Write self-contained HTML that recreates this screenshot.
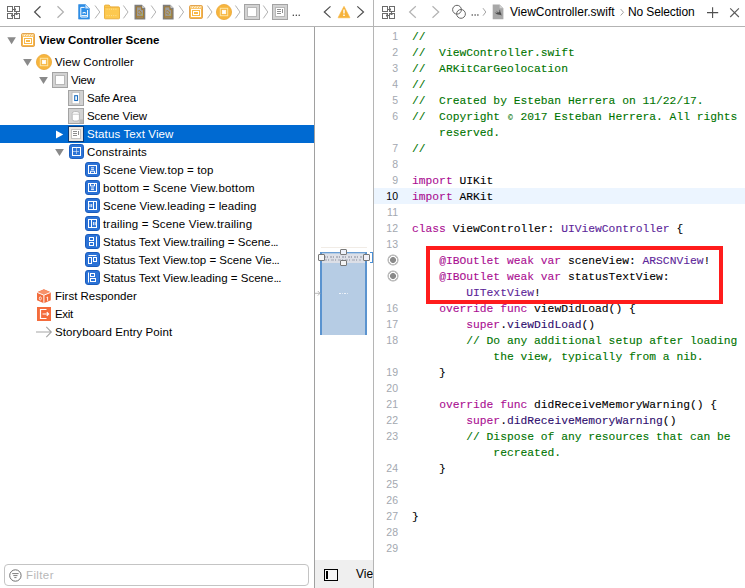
<!DOCTYPE html>
<html><head><meta charset="utf-8">
<style>
*{margin:0;padding:0;box-sizing:border-box}
html,body{width:745px;height:588px;overflow:hidden;background:#fff}
body{position:relative;font-family:"Liberation Sans",sans-serif;font-size:12px;color:#000}
.a{position:absolute}
svg{position:absolute;overflow:visible}
.hl{position:absolute;background:#bcbcbc}
.t{position:absolute;white-space:pre;font-size:11.5px;line-height:18px;height:18px;letter-spacing:0.18px}
.b{font-weight:bold;letter-spacing:0}
.j{font-size:12px;letter-spacing:0}
.el{letter-spacing:-0.8px}
.code{position:absolute;left:412px;top:0;font-family:"Liberation Mono",monospace;font-size:11.3px;white-space:pre}
.ln{position:absolute;font-family:"Liberation Sans",sans-serif;font-size:10.5px;line-height:16px;color:#a3a8b0;text-align:right;width:30px;left:368px}
.ln.cur{color:#000}
.ob{position:absolute;left:387.4px;width:12px;height:12px;margin-top:0px;background:radial-gradient(circle at 50% 50%,#8a8a8a 0,#8a8a8a 2.7px,#fdfdfd 3.2px,#fdfdfd 3.8px,#bdbdbd 4.3px,#bdbdbd 5.2px,rgba(255,255,255,0) 5.9px)}
.cl{position:absolute;left:412px;margin-top:1px;font-family:"Liberation Mono",monospace;font-size:11.3px;white-space:pre;line-height:16px;height:16px;-webkit-text-stroke:0.1px}
.c{color:#007400}.k{color:#aa0d91}.ty{color:#5c2699}.m{color:#2e0d6e}
</style></head><body>

<!-- top bar separators -->
<div class="hl" style="left:0;top:26px;width:745px;height:1px;background:#b3b3b3"></div>
<div class="hl" style="left:373px;top:0;width:1px;height:588px;background:#b5b5b5"></div>
<div class="hl" style="left:314px;top:27px;width:1px;height:561px;background:#a0a0a0"></div>

<!-- selection row -->
<div class="a" style="left:0;top:125px;width:314px;height:18px;background:#006ad2"></div>

<!-- outline rows -->
<div class="t b" style="left:39px;top:31px;letter-spacing:-0.045px">View Controller Scene</div>
<div class="t" style="left:55px;top:53px;letter-spacing:0.079px">View Controller</div>
<div class="t" style="left:71px;top:71px;letter-spacing:-0.220px">View</div>
<div class="t" style="left:87px;top:89px;letter-spacing:-0.170px">Safe Area</div>
<div class="t" style="left:87px;top:107px;letter-spacing:-0.054px">Scene View</div>
<div class="t" style="left:87px;top:125px;color:#fff;letter-spacing:0.120px">Status Text View</div>
<div class="t" style="left:87px;top:143px;letter-spacing:0.170px">Constraints</div>
<div class="t" style="left:103px;top:161px;letter-spacing:0.123px">Scene View.top = top</div>
<div class="t" style="left:103px;top:179px;letter-spacing:0.204px">bottom = Scene View.bottom</div>
<div class="t" style="left:103px;top:197px;letter-spacing:0.114px">Scene View.leading = leading</div>
<div class="t" style="left:103px;top:215px;letter-spacing:0.176px">trailing = Scene View.trailing</div>
<div class="t" style="left:103px;top:233px;letter-spacing:0.023px">Status Text View.trailing = Scene<span class="el">...</span></div>
<div class="t" style="left:103px;top:251px;letter-spacing:0.004px">Status Text View.top = Scene Vie<span class="el">...</span></div>
<div class="t" style="left:103px;top:269px;letter-spacing:0.015px">Status Text View.leading = Scene<span class="el">...</span></div>
<div class="t" style="left:55px;top:287px;letter-spacing:-0.006px">First Responder</div>
<div class="t" style="left:55px;top:305px;letter-spacing:-0.320px">Exit</div>
<div class="t" style="left:55px;top:323px;letter-spacing:0.067px">Storyboard Entry Point</div>

<!-- filter -->
<div class="a" style="left:4px;top:564px;width:305px;height:22px;border:1px solid #c4c4c4;border-radius:4px"></div>
<div class="t" style="left:26px;top:566px;color:#b8b8b8;letter-spacing:0.38px">Filter</div>

<!-- canvas bottom bar -->
<div class="a" style="left:315px;top:560px;width:58px;height:28px;background:#efefef;overflow:hidden">
<div class="a" style="left:9px;top:9px;width:14px;height:12px;border:1.2px solid #000;background:#f7f7f7"></div>
<div class="a" style="left:11px;top:11px;width:2.4px;height:8px;background:#000"></div>
<div class="a" style="left:41px;top:5px;font-size:12px;line-height:18px;white-space:pre">View</div>
</div>
<!-- canvas scene -->
<div class="a" style="left:321px;top:247px;width:46px;height:1px;background:#f1ece6"></div>
<div class="a" style="left:320px;top:252px;width:47px;height:83px;background:#b6cce4;border-left:2px solid #5a93cf;border-right:2px solid #5a93cf;border-top:1.5px solid #6a9ed4"></div>
<div class="a" style="left:322px;top:254px;width:43px;height:9px;background:#dcdfe7"></div>
<div class="a" style="left:324px;top:256px;width:39px;height:2px;background:repeating-linear-gradient(90deg,#b3b7c3 0 2px,#d9dce4 2px 3px,#a9adb9 3px 4px,#e2e4ea 4px 6px)"></div>
<div class="a" style="left:324px;top:259px;width:37px;height:2px;background:repeating-linear-gradient(90deg,#bfc2cc 0 3px,#e0e2e8 3px 4px,#b0b4bf 4px 5px,#dadde4 5px 7px)"></div>

<div class="a" style="left:340px;top:249px;width:7px;height:6px;border:1px solid #7a7a7a;background:#eef2fa;border-radius:1px"></div>
<div class="a" style="left:318px;top:254px;width:7px;height:7px;border:1px solid #767676;background:#f8f8f8;border-radius:1px"></div>
<div class="a" style="left:363px;top:254px;width:7px;height:7px;border:1px solid #767676;background:#f0f0f8;border-radius:1px"></div>
<div class="a" style="left:340px;top:260px;width:7px;height:6px;border:1px solid #767676;background:#f4f4f4;border-radius:1px"></div>
<div class="a" style="left:370px;top:252px;width:3px;height:11px;border:1px solid #4a8fd6;border-left:none"></div>
<div class="a" style="left:339px;top:292.6px;width:10px;height:1.2px;background:repeating-linear-gradient(90deg,#eef3fa 0 2px,transparent 2px 3px,#e3eaf4 3px 4px,transparent 4px 5px)"></div>
<svg width="10" height="10" style="left:314px;top:288px"><path d="M1 5.3H6M3.8 3L6 5.3L3.8 7.6" fill="none" stroke="#b0b0b0" stroke-width="0.9"/></svg>


<!-- editor current line -->
<div class="a" style="left:374px;top:188px;width:371px;height:16px;background:#ecf5ff"></div>

<!-- editor jump bar text -->
<div class="t j" style="left:510px;top:3px;letter-spacing:0.005px">ViewController.swift</div>
<div class="t j" style="left:628px;top:3px;letter-spacing:-0.128px">No Selection</div>

<!-- code -->
<!--CODE-->
<div class="ln" style="top:28px">1</div>
<div class="cl" style="top:28px"><span class="c">//</span></div>
<div class="ln" style="top:44px">2</div>
<div class="cl" style="top:44px"><span class="c">//  ViewController.swift</span></div>
<div class="ln" style="top:60px">3</div>
<div class="cl" style="top:60px"><span class="c">//  ARKitCarGeolocation</span></div>
<div class="ln" style="top:76px">4</div>
<div class="cl" style="top:76px"><span class="c">//</span></div>
<div class="ln" style="top:92px">5</div>
<div class="cl" style="top:92px"><span class="c">//  Created by Esteban Herrera on 11/22/17.</span></div>
<div class="ln" style="top:108px">6</div>
<div class="cl" style="top:108px"><span class="c">//  Copyright <span style="display:inline-block;width:6.78px;font-size:8px;text-align:center;vertical-align:0px">©</span> 2017 Esteban Herrera. All rights</span></div>
<div class="cl" style="top:124px"><span class="c">    reserved.</span></div>
<div class="ln" style="top:140px">7</div>
<div class="cl" style="top:140px"><span class="c">//</span></div>
<div class="ln" style="top:156px">8</div>
<div class="ln" style="top:172px">9</div>
<div class="cl" style="top:172px"><span class="k">import</span> UIKit</div>
<div class="ln cur" style="top:188px">10</div>
<div class="cl" style="top:188px"><span class="k">import</span> ARKit</div>
<div class="ln" style="top:204px">11</div>
<div class="ln" style="top:220px">12</div>
<div class="cl" style="top:220px"><span class="k">class</span> ViewController: <span class="ty">UIViewController</span> {</div>
<div class="ln" style="top:236px">13</div>
<div class="ob" style="top:253.8px"></div>
<div class="cl" style="top:252px">    <span class="k">@IBOutlet weak var</span> sceneView: <span class="ty">ARSCNView</span>!</div>
<div class="ob" style="top:269.9px"></div>
<div class="cl" style="top:268px">    <span class="k">@IBOutlet weak var</span> statusTextView:</div>
<div class="cl" style="top:284px">        <span class="ty">UITextView</span>!</div>
<div class="ln" style="top:300px">16</div>
<div class="cl" style="top:300px">    <span class="k">override func</span> viewDidLoad() {</div>
<div class="ln" style="top:316px">17</div>
<div class="cl" style="top:316px">        <span class="k">super</span>.<span class="m">viewDidLoad</span>()</div>
<div class="ln" style="top:332px">18</div>
<div class="cl" style="top:332px"><span class="c">        // Do any additional setup after loading</span></div>
<div class="cl" style="top:348px"><span class="c">            the view, typically from a nib.</span></div>
<div class="ln" style="top:364px">19</div>
<div class="cl" style="top:364px">    }</div>
<div class="ln" style="top:380px">20</div>
<div class="ln" style="top:396px">21</div>
<div class="cl" style="top:396px">    <span class="k">override func</span> didReceiveMemoryWarning() {</div>
<div class="ln" style="top:412px">22</div>
<div class="cl" style="top:412px">        <span class="k">super</span>.<span class="m">didReceiveMemoryWarning</span>()</div>
<div class="ln" style="top:428px">23</div>
<div class="cl" style="top:428px"><span class="c">        // Dispose of any resources that can be</span></div>
<div class="cl" style="top:444px"><span class="c">            recreated.</span></div>
<div class="ln" style="top:460px">24</div>
<div class="cl" style="top:460px">    }</div>
<div class="ln" style="top:476px">25</div>
<div class="ln" style="top:492px">26</div>
<div class="ln" style="top:508px">27</div>
<div class="cl" style="top:508px">}</div>
<div class="ln" style="top:524px">28</div>
<div class="ln" style="top:540px">29</div>
<!--/CODE-->

<!-- red box -->
<div class="a" style="left:426px;top:246px;width:297px;height:58px;border:4px solid #ff1c1c"></div>

<!--ICONS-->
<svg width="745" height="588" style="left:0;top:0">
<!-- ===== left jump bar ===== -->
<g fill="none" stroke="#6b6b6b" stroke-width="1">
 <rect x="7.5" y="6.5" width="5" height="5"/><rect x="14.5" y="6.5" width="5" height="5"/>
 <rect x="7.5" y="13.5" width="5" height="5"/><rect x="14.5" y="13.5" width="5" height="5"/>
 <path d="M12.5 9.5H15.5M15.5 8.5V10.5M16.5 11.5V14.5M15.5 14.5H17.5M14.5 15.5H11.5M11.5 14.5V16.5"/>
</g>
<polyline points="40.5,6.3 34.6,12 40.5,17.7" fill="none" stroke="#505050" stroke-width="1.2"/>
<polyline points="57.5,6.3 63.4,12 57.5,17.7" fill="none" stroke="#b0b0b0" stroke-width="1.2"/>
<!-- blue doc -->
<path d="M78.6 4.6H85.6L89.4 8.4V19.1H78.6Z" fill="#2e8fe8" stroke="#2b86dc" stroke-width="0.6"/>
<path d="M85.4 4.6V8.6H89.4Z" fill="#cfe5fb"/>
<path d="M80.8 7.4H84.6M80.8 7.4V17H87.6V10" fill="none" stroke="#fff" stroke-width="1"/>
<path d="M82.6 13.4Q84.2 11.6 85.8 13.4" fill="none" stroke="#fff" stroke-width="1.2"/>
<path d="M81.3 15.5H87.1" stroke="#fff" stroke-width="0.9"/>
<!-- separators -->
<g fill="none" stroke="#a9a9a9" stroke-width="0.9">
 <polyline points="95,5.5 99.8,12 95,18.4"/>
 <polyline points="123.4,5.5 128,12 123.4,18.4"/>
 <polyline points="151.2,5.5 155.8,12 151.2,18.4"/>
 <polyline points="179,5.5 183.6,12 179,18.4"/>
 <polyline points="207.4,5.5 212,12 207.4,18.4"/>
 <polyline points="235.4,5.5 240,12 235.4,18.4"/>
 <polyline points="263.3,5.5 267.8,12 263.3,18.4"/>
 <polyline points="483,8.2 485.8,12 483,15.7" stroke="#9a9a9a"/>
 <polyline points="620.6,9 623.5,12.3 620.6,15.5" stroke="#9a9a9a"/>
</g>
<!-- folder -->
<path d="M104.5 6Q104.5 5.1 105.4 5.1H109.2L110.6 6.9H118.7Q119.5 6.9 119.5 7.7V18Q119.5 18.8 118.7 18.8H105.3Q104.5 18.8 104.5 18Z" fill="#fdc94f" stroke="#e9ad38" stroke-width="0.9"/>
<path d="M105 7.4H119" stroke="#eeb440" stroke-width="0.8"/>
<path d="M106.6 9.2H117.6M106.6 15.6H117.6" stroke="#fee6a6" stroke-width="0.8" stroke-dasharray="1 1.2"/>
<!-- brown docs -->
<g id="bd">
<path d="M134.5 4.8H142L145.3 8.1V19.6H134.5Z" fill="#7e7e7e"/>
<path d="M142 4.8V8.1H145.3Z" fill="#c4c4c4"/>
<path d="M136.4 6.9H141.6V9.6H143.5V17.9H136.4Z" fill="#9c9c9c" stroke="#a57a2c" stroke-width="1"/>
<path d="M137.8 11.2Q139.8 9.6 141 12Q142.1 14 140 14.2Q138.3 14.2 137.8 12.6" fill="none" stroke="#a87b2a" stroke-width="0.9"/>
<path d="M140.8 13.6L142.8 15.3" stroke="#a9c23c" stroke-width="0.9"/>
<path d="M137 16.4H143" stroke="#a57a2c" stroke-width="0.9"/>
</g>
<use href="#bd" x="28.3"/>
<!-- scene icon top -->
<g id="sc">
<rect x="189.5" y="5.5" width="13" height="13" rx="1.3" fill="#f9b847" stroke="#e3a450" stroke-width="1"/>
<rect x="190.3" y="6.3" width="11.4" height="2" fill="#fff4d6"/><path d="M190.5 8.3L192 6.3M193 8.3L194.5 6.3M195.5 8.3L197 6.3M198 8.3L199.5 6.3M200.5 8.3L202 6.3" stroke="#f3b24e" stroke-width="0.9"/>
<rect x="191.5" y="9.5" width="9" height="7" fill="none" stroke="#fff" stroke-width="1"/>
<rect x="193.5" y="11.5" width="5" height="3" fill="none" stroke="#fff" stroke-width="1"/>
</g>
<!-- VC circle top -->
<g id="vc">
<circle cx="224" cy="12" r="7.6" fill="#f7b53d" stroke="#eba838" stroke-width="0.8"/>
<rect x="220.3" y="8.3" width="7.4" height="7.4" fill="none" stroke="#fde4a3" stroke-width="1"/>
<rect x="222.2" y="10.2" width="3.6" height="3.6" fill="#fff" stroke="#fff" stroke-width="0.6"/>
</g>
<!-- view square top -->
<g id="vw">
<rect x="244.5" y="4.5" width="15" height="15" fill="#d2d2d2" stroke="#a3a3a3" stroke-width="1"/>
<rect x="247.5" y="7.5" width="9" height="9" fill="#fff" stroke="#b8b8b8" stroke-width="1"/>
</g>
<!-- textview top -->
<g id="tv">
<rect x="272.5" y="4.5" width="15" height="15" fill="#d2d2d2" stroke="#a3a3a3" stroke-width="1"/>
<rect x="275.5" y="7.5" width="9" height="9" fill="#fff" stroke="#b8b8b8" stroke-width="1"/>
<path d="M277 9.5H281M277 11.5H281M277 13.5H281M282.5 9V13" stroke="#8f8f8f" stroke-width="1"/>
</g>
<!-- ellipsis dots -->
<g fill="#2a2a2a"><circle cx="293.3" cy="15.3" r="0.7"/><circle cx="296.3" cy="15.3" r="0.7"/><circle cx="299.2" cy="15.3" r="0.7"/>
<circle cx="472.2" cy="15" r="0.7"/><circle cx="475.1" cy="15" r="0.7"/><circle cx="477.9" cy="15" r="0.7"/></g>
<!-- issue nav -->
<polyline points="330.5,6.4 324.3,12 330.5,17.6" fill="none" stroke="#4f4f4f" stroke-width="1.2"/>
<polyline points="357.3,6.4 363.5,12 357.3,17.6" fill="none" stroke="#4f4f4f" stroke-width="1.2"/>
<path d="M344 6.3L349.8 17.4Q350 17.8 349.5 17.8H338.5Q338 17.8 338.2 17.4Z" fill="#f6b33a" stroke="#f6b33a" stroke-width="0.6" stroke-linejoin="round"/>
<path d="M344 9.6V13.4" stroke="#fff" stroke-width="1.4"/><rect x="343.2" y="14.6" width="1.6" height="1.4" fill="#fff"/>

<!-- ===== right jump bar ===== -->
<g fill="none" stroke="#6b6b6b" stroke-width="1">
 <rect x="382.5" y="6.5" width="5" height="5"/><rect x="389.5" y="6.5" width="5" height="5"/>
 <rect x="382.5" y="13.5" width="5" height="5"/><rect x="389.5" y="13.5" width="5" height="5"/>
 <path d="M387.5 9.5H390.5M390.5 8.5V10.5M391.5 11.5V14.5M390.5 14.5H392.5M389.5 15.5H386.5M386.5 14.5V16.5"/>
</g>
<polyline points="415.8,6.3 409.6,12 415.8,17.7" fill="none" stroke="#b3b3b3" stroke-width="1.2"/>
<polyline points="432.5,6.3 438.7,12 432.5,17.7" fill="none" stroke="#b3b3b3" stroke-width="1.2"/>
<circle cx="457" cy="9.7" r="4.4" fill="none" stroke="#666" stroke-width="1"/>
<circle cx="461" cy="13.9" r="4.4" fill="none" stroke="#666" stroke-width="1"/>
<!-- swift file -->
<path d="M492.7 4.4H499.6L503.4 8.2V19.3H492.7Z" fill="#a8a8a8"/>
<path d="M499.6 4.4V8.2H503.4Z" fill="#d0d0d0"/>
<path d="M494.6 12.5Q497 15 499.5 14.8Q500.8 14.9 501.4 15.8Q501.7 13.6 500.4 12Q500.6 10.6 499.3 9.6Q500 11.6 498.8 12.4Q496.8 11.5 495.6 10.2Q496.9 12 497.8 12.9Q496.3 12.8 494.6 12.5Z" fill="#4d4d4d"/>
<!-- plus / close -->
<path d="M712.6 7.2V18.1M707 12.6H718.2" stroke="#4f4f4f" stroke-width="1.1"/>
<path d="M730.2 8.3L738.9 17M738.9 8.3L730.2 17" stroke="#5a5a5a" stroke-width="1.1"/>
</svg>

<!--/ICONS-->
<!--ICONS2-->
<svg width="745" height="588" style="left:0;top:0">
<!-- disclosure triangles -->
<g fill="#8a8a8a">
<path d="M7.3 37.3H15.9L11.6 44.2Z"/>
<path d="M23.1 59H31.9L27.5 66Z"/>
<path d="M39.1 77H47.9L43.5 84Z"/>
<path d="M55.1 149H63.9L59.5 156Z"/>
</g>
<path d="M56 130.4L63.2 134.5L56 138.6Z" fill="#fff"/>
<!-- scene icon -->
<use href="#sc" x="-168" y="28"/>
<!-- VC circle -->
<use href="#vc" x="-180" y="50"/>
<!-- view -->
<use href="#vw" x="-192" y="68"/>
<!-- safe area -->
<rect x="68.5" y="90.5" width="15" height="15" fill="#d2d2d2" stroke="#a3a3a3" stroke-width="1"/>
<rect x="72" y="92.3" width="7.6" height="11.6" fill="#fff" stroke="#bdbdbd" stroke-width="1"/>
<rect x="74.7" y="95.7" width="2.8" height="4.8" fill="none" stroke="#1f70c0" stroke-width="1.1"/>
<!-- scene view -->
<rect x="68.5" y="108.5" width="15" height="15" fill="#d2d2d2" stroke="#a3a3a3" stroke-width="1"/>
<rect x="72.2" y="111.6" width="7.2" height="9.4" rx="2.4" ry="1.8" fill="#fff" stroke="#b3b3b3" stroke-width="0.9"/>
<path d="M72.6 114.2H79" stroke="#c4c4c4" stroke-width="0.9"/>
<rect x="79.5" y="119.5" width="3.5" height="3.5" fill="#b4b4b4"/>
<!-- status text view (selected) -->
<rect x="68.5" y="126.5" width="15" height="15" fill="#ebe6df" stroke="#0a3a78" stroke-width="1"/>
<rect x="71.5" y="129.5" width="9" height="9" fill="#fff" stroke="#c4c4c4" stroke-width="1"/>
<path d="M73 131.5H77M73 133.5H77M73 135.5H77M78.5 131V135" stroke="#8f8f8f" stroke-width="1"/>
<!-- constraints group icon -->
<rect x="69.5" y="144.5" width="14" height="14" rx="2.2" fill="#2c73d6" stroke="#1d5fbf" stroke-width="1"/>
<rect x="72.5" y="147.5" width="8" height="8" fill="none" stroke="#fff" stroke-width="1"/>
<path d="M76.5 148.5V154.5M73.5 151.5H79.5" stroke="#fff" stroke-width="1" stroke-dasharray="1 1"/>
<!-- constraint icons -->
<g id="ci">
<rect x="85.5" y="162.5" width="14" height="14" rx="2.4" fill="#2b72d6" stroke="#1a5cbd" stroke-width="1"/>
</g>
<use href="#ci" y="18"/><use href="#ci" y="36"/><use href="#ci" y="54"/><use href="#ci" y="72"/><use href="#ci" y="90"/><use href="#ci" y="108"/>
<g fill="none" stroke="#fff" stroke-width="1">
 <!-- c1 top -->
 <rect x="88.5" y="165.5" width="8" height="8"/><path d="M91 167.8H94M91 169.4H94" stroke-width="0.9"/><path d="M90.5 173.5V171.2H94.5V173.5"/>
 <!-- c2 bottom -->
 <rect x="88.5" y="183.5" width="8" height="8"/><path d="M90.5 183.5V186H94.5V183.5"/><path d="M91 188H94M91 189.6H94" stroke-width="0.9"/>
 <!-- c3 leading -->
 <rect x="88.5" y="201.5" width="8" height="8"/><path d="M93.5 201.5V209.5"/><path d="M90 204V207.2M91.7 204V207.2" stroke-width="0.9"/>
 <!-- c4 trailing -->
 <rect x="88.5" y="219.5" width="8" height="8"/><path d="M91.5 219.5V227.5"/><path d="M93.6 222V225.2M95.2 222V225.2" stroke-width="0.9"/>
 <!-- c5 trailing status -->
 <rect x="89.5" y="237.5" width="4" height="3"/><rect x="89.5" y="242.5" width="4" height="3"/><path d="M96.5 236.5V246.5"/>
 <!-- c6 top status -->
 <path d="M88.5 255.5H96.5"/><rect x="88.5" y="257.5" width="3" height="6"/><rect x="93.5" y="257.5" width="3" height="4"/>
 <!-- c7 leading status -->
 <path d="M88.5 272.5V282.5"/><rect x="90.5" y="273.5" width="4" height="3"/><rect x="90.5" y="278.5" width="5" height="3"/>
</g>
<!-- first responder cube -->
<path d="M43.9 289.3L50.8 292.2V300.3L43.9 303.2L37 300.3V292.2Z" fill="#f26c3c"/>
<path d="M43.9 289.6L50.5 292.3L43.9 295.1L37.3 292.3Z" fill="#f7916a"/><path d="M37.2 292.4L43.9 295.2L50.6 292.4M43.9 295.2V303" fill="none" stroke="#fff" stroke-width="1"/>
<path d="M46.6 297.5L47.6 297V300.8" fill="none" stroke="#fff" stroke-width="0.9"/>
<ellipse cx="40.3" cy="298.4" rx="1" ry="1.6" fill="none" stroke="#fff" stroke-width="0.8"/>
<!-- exit -->
<rect x="37" y="307" width="14" height="14" fill="#f46c3c"/>
<path d="M46.5 309.5H40.5V318.5H46.5M42.5 314H48.5M46.8 312.2L48.6 314L46.8 315.8" fill="none" stroke="#fff" stroke-width="1.2"/>
<!-- entry arrow -->
<path d="M36 332H51.3M46.3 326.8L51.3 332L46.3 337.2" fill="none" stroke="#a6a6a6" stroke-width="1.1"/>
<!-- filter icon -->
<circle cx="15.4" cy="575.5" r="5.7" fill="none" stroke="#6e6e6e" stroke-width="1"/>
<path d="M12.2 573.6H18.6M13.3 575.6H17.5M14.3 577.6H16.5" stroke="#6e6e6e" stroke-width="0.9"/>
</svg>

<!--/ICONS2-->
</body></html>
